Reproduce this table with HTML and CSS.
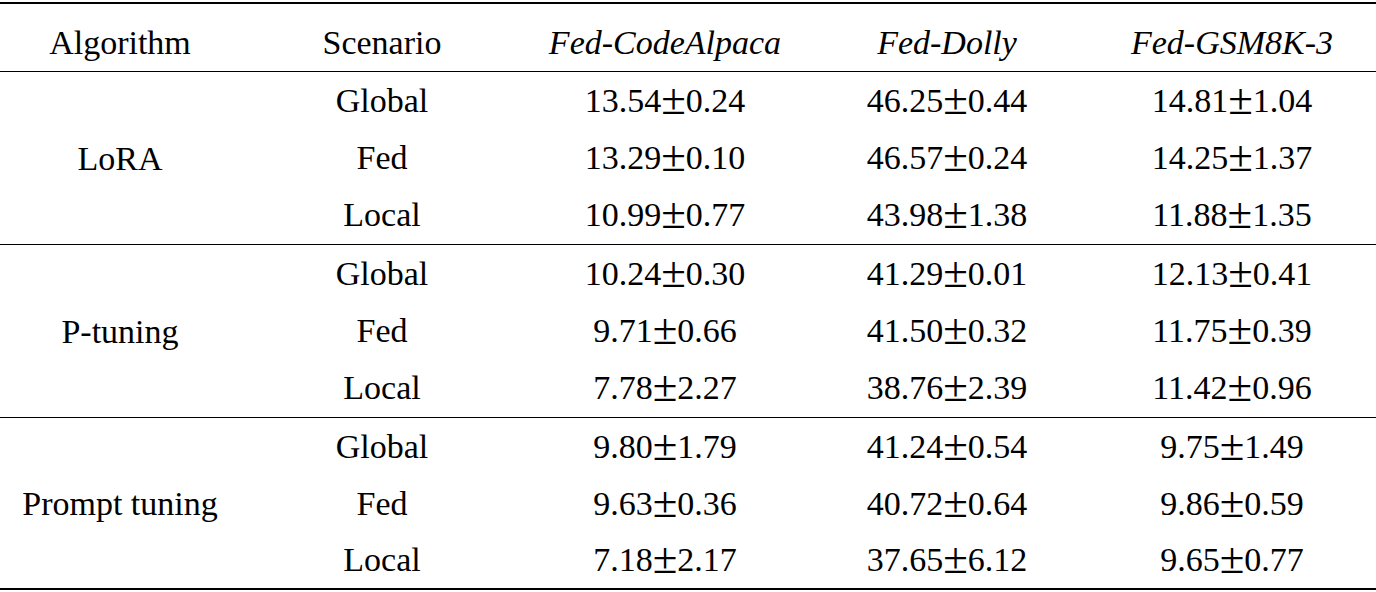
FILE: index.html
```html
<!DOCTYPE html>
<html lang="en">
<head>
  <meta charset="UTF-8" />
  <title>Results table</title>
  <link rel="stylesheet" href="styles.css">
</head>
<body>
  <div class="page">
    <table class="results">
      <colgroup>
        <col class="c-algo">
        <col class="c-scen">
        <col class="c-data">
        <col class="c-data">
        <col class="c-last">
      </colgroup>
      <thead>
        <tr>
          <th>Algorithm</th>
          <th>Scenario</th>
          <th><i>Fed-CodeAlpaca</i></th>
          <th><i>Fed-Dolly</i></th>
          <th><i>Fed-GSM8K-3</i></th>
        </tr>
      </thead>
      <tbody>
        <!-- LoRA -->
        <tr>
          <td rowspan="3" class="end">LoRA</td>
          <td>Global</td>
          <td>13.54<span class="pm">±</span>0.24</td>
          <td>46.25<span class="pm">±</span>0.44</td>
          <td>14.81<span class="pm">±</span>1.04</td>
        </tr>
        <tr>
          <td>Fed</td>
          <td>13.29<span class="pm">±</span>0.10</td>
          <td>46.57<span class="pm">±</span>0.24</td>
          <td>14.25<span class="pm">±</span>1.37</td>
        </tr>
        <tr class="group-end">
          <td>Local</td>
          <td>10.99<span class="pm">±</span>0.77</td>
          <td>43.98<span class="pm">±</span>1.38</td>
          <td>11.88<span class="pm">±</span>1.35</td>
        </tr>

        <!-- P-tuning -->
        <tr>
          <td rowspan="3" class="end">P-tuning</td>
          <td>Global</td>
          <td>10.24<span class="pm">±</span>0.30</td>
          <td>41.29<span class="pm">±</span>0.01</td>
          <td>12.13<span class="pm">±</span>0.41</td>
        </tr>
        <tr>
          <td>Fed</td>
          <td>9.71<span class="pm">±</span>0.66</td>
          <td>41.50<span class="pm">±</span>0.32</td>
          <td>11.75<span class="pm">±</span>0.39</td>
        </tr>
        <tr class="group-end">
          <td>Local</td>
          <td>7.78<span class="pm">±</span>2.27</td>
          <td>38.76<span class="pm">±</span>2.39</td>
          <td>11.42<span class="pm">±</span>0.96</td>
        </tr>

        <!-- Prompt tuning -->
        <tr>
          <td rowspan="3" class="last">Prompt tuning</td>
          <td>Global</td>
          <td>9.80<span class="pm">±</span>1.79</td>
          <td>41.24<span class="pm">±</span>0.54</td>
          <td>9.75<span class="pm">±</span>1.49</td>
        </tr>
        <tr>
          <td>Fed</td>
          <td>9.63<span class="pm">±</span>0.36</td>
          <td>40.72<span class="pm">±</span>0.64</td>
          <td>9.86<span class="pm">±</span>0.59</td>
        </tr>
        <tr class="table-end">
          <td>Local</td>
          <td>7.18<span class="pm">±</span>2.17</td>
          <td>37.65<span class="pm">±</span>6.12</td>
          <td>9.65<span class="pm">±</span>0.77</td>
        </tr>
      </tbody>
    </table>
  </div>
</body>
</html>
```

FILE: styles.css
```css
/* Page blanche, texte en police type Times */
body {
  margin: 0;
  background: #fff;
  color: #000;
  font-family: "Liberation Serif", "Times New Roman", serif;
  font-size: 34px;
}

.page {
  padding-top: 2px;
}

/* Tableau façon booktabs : pas de bordures verticales */
.results {
  width: 1376px;
  table-layout: fixed;
  border-collapse: separate;
  border-spacing: 0;
}

.c-algo { width: 240px; }
.c-scen { width: 284px; }
.c-data { width: 282px; }
.c-last { width: 288px; }

.results th,
.results td {
  padding: 0;
  text-align: center;
  vertical-align: middle;
  white-space: nowrap;
}

/* En-tête : toprule épais, midrule fin */
.results th {
  font-weight: normal;
  line-height: 38px;
  padding-top: 20px;
  padding-bottom: 9px;
  border-top: 2px solid #000;
  border-bottom: 1px solid #000;
}

.results td {
  line-height: 57px;
}

/* Séparation entre les groupes d'algorithmes */
.results tr.group-end td,
.results td.end {
  border-bottom: 1px solid #000;
}

.results tr.group-end td {
  line-height: 58px;
}

/* bottomrule */
.results tr.table-end td,
.results td.last {
  border-bottom: 2px solid #000;
}

.results tr.table-end td {
  line-height: 56px;
}

/* Le ± de LaTeX est plus grand que celui de la police */
.pm {
  font-size: 1.32em;
  line-height: 0;
  position: relative;
  top: 2px;
}
```
